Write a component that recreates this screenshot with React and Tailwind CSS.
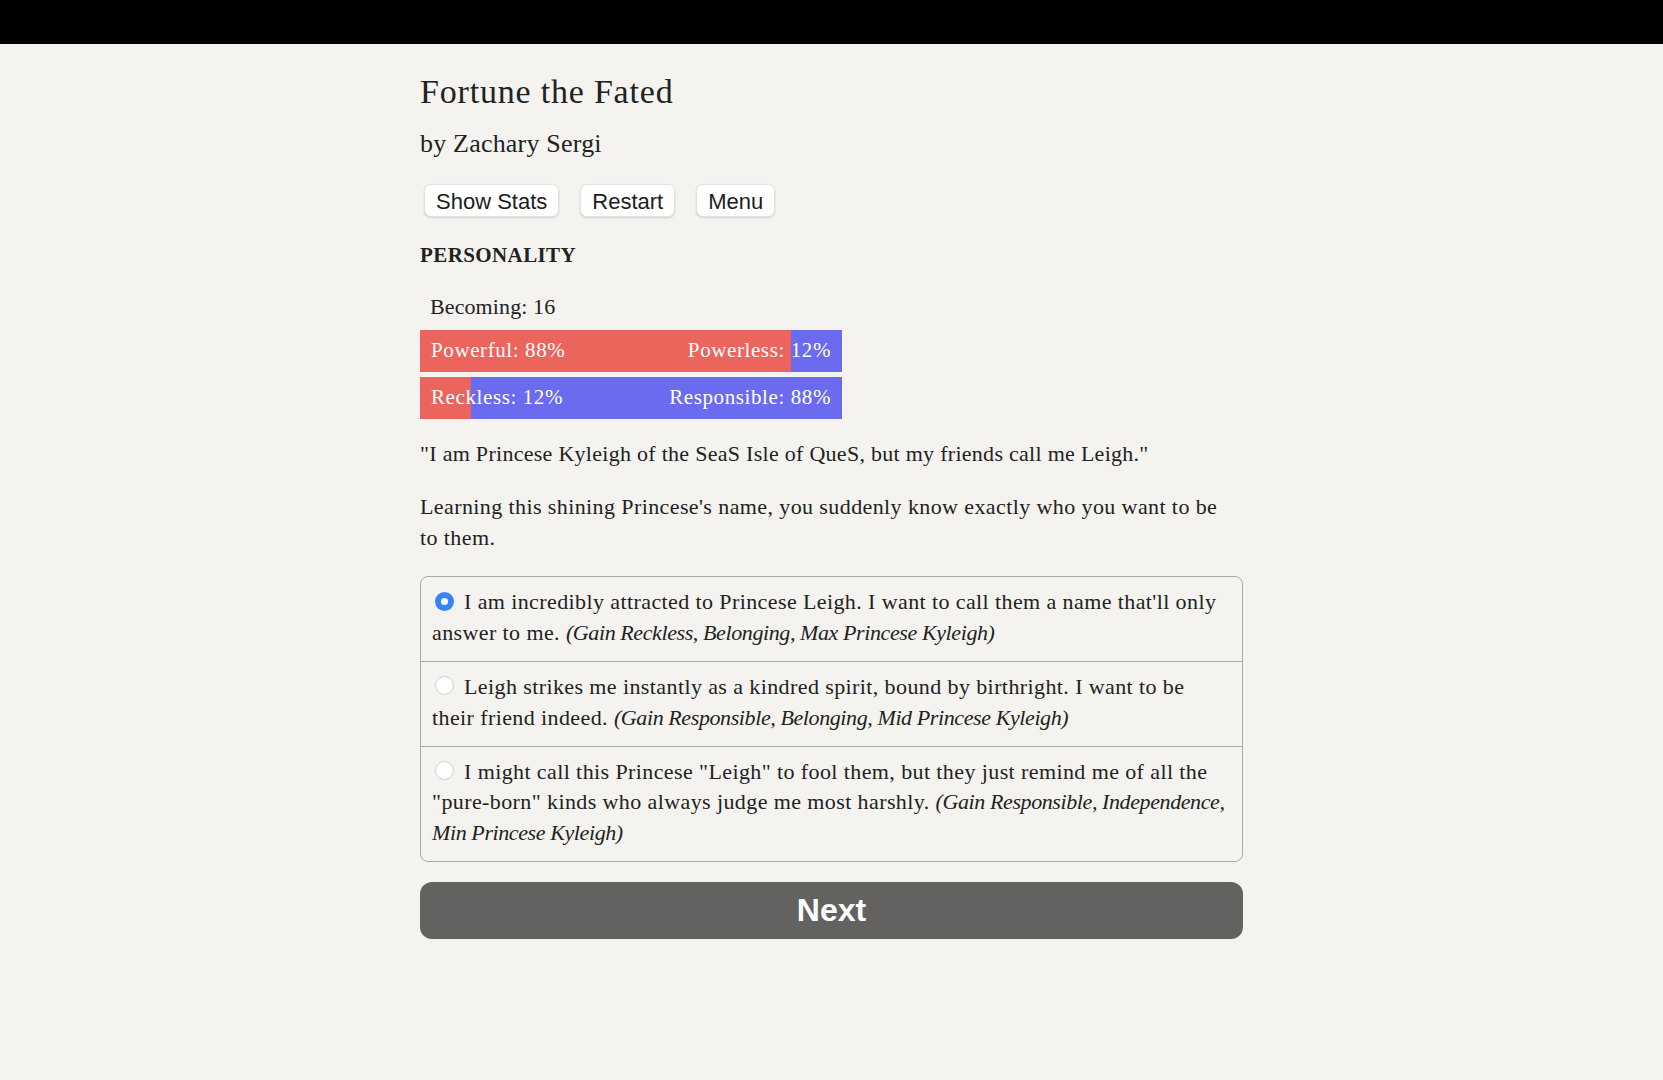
import { useState } from "react";

const SERIF = "font-['Liberation_Serif',serif]";
const SANS = "font-['Liberation_Sans',Arial,sans-serif]";

const OPTIONS = [
  {
    text: "I am incredibly attracted to Princese Leigh. I want to call them a name that'll only answer to me.",
    note: "(Gain Reckless, Belonging, Max Princese Kyleigh)",
  },
  {
    text: "Leigh strikes me instantly as a kindred spirit, bound by birthright. I want to be their friend indeed.",
    note: "(Gain Responsible, Belonging, Mid Princese Kyleigh)",
  },
  {
    text: 'I might call this Princese "Leigh" to fool them, but they just remind me of all the "pure-born" kinds who always judge me most harshly.',
    note: "(Gain Responsible, Independence, Min Princese Kyleigh)",
  },
];

function StatBar({ left, right, pct }) {
  return (
    <div className="relative h-[42px] w-[422px] bg-[#6b6bf0]">
      <div className="h-full bg-[#ec655d]" style={{ width: `${pct}%` }} />
      <div className="absolute inset-0 flex items-center justify-between px-[11px] pb-[3px] text-[21px] leading-[30px] tracking-[0.6px] text-white">
        <span>{left}</span>
        <span>{right}</span>
      </div>
    </div>
  );
}

function Radio({ checked }) {
  return checked ? (
    <span className="mr-[10px] ml-[3px] inline-flex h-[19px] w-[19px] shrink-0 -translate-y-[3px] items-center justify-center rounded-full bg-[#3b82f6] align-middle">
      <span className="h-[7px] w-[7px] rounded-full bg-white" />
    </span>
  ) : (
    <span className="mr-[10px] ml-[3px] inline-block h-[19px] w-[19px] shrink-0 -translate-y-[3px] rounded-full border border-[#cfcfcf] bg-white align-middle" />
  );
}

export default function App() {
  const [choice, setChoice] = useState(0);

  return (
    <div className={`min-h-[1080px] bg-[#f4f3ef] text-[#222] ${SERIF}`}>
      <div className="h-[44px] bg-black" />

      <div className="mx-auto w-[823px]">
        <h1 className="mt-[28px] text-[34px] leading-[40px] tracking-[0.8px]">Fortune the Fated</h1>
        <p className="mt-[16px] text-[26px] leading-[32px] tracking-[0.2px]">by Zachary Sergi</p>

        <div className={`mt-[24px] ml-[4px] flex gap-[21px] ${SANS}`}>
          {["Show Stats", "Restart", "Menu"].map(b => (
            <button key={b} className="h-[33px] rounded-[7px] border border-[#e2e2e2] bg-white px-[11px] text-[22px] leading-[33px] text-[#1c1c1c] shadow-[0_1px_2px_rgba(0,0,0,0.15)]">
              {b}
            </button>
          ))}
        </div>

        <h2 className="mt-[26px] text-[21px] font-bold leading-[24px] tracking-[0.4px]">PERSONALITY</h2>

        <p className="mt-[25px] pl-[10px] text-[22px] leading-[30px] tracking-[0.1px]">Becoming: 16</p>

        <div className="mt-[8px] flex flex-col gap-[5px]">
          <StatBar left="Powerful: 88%" right="Powerless: 12%" pct={88} />
          <StatBar left="Reckless: 12%" right="Responsible: 88%" pct={12} />
        </div>

        <p className="mt-[20px] text-[22px] leading-[30.8px] tracking-[0.28px]">
          "I am Princese Kyleigh of the SeaS Isle of QueS, but my friends call me Leigh."
        </p>
        <p className="mt-[22px] pr-[14px] text-[22px] leading-[30.8px] tracking-[0.4px]">
          Learning this shining Princese's name, you suddenly know exactly who you want to be to them.
        </p>

        <div className="mt-[23px] overflow-hidden rounded-[8px] border border-[#a9a9a9] tracking-[0.4px]">
          {OPTIONS.map((o, i) => (
            <label
              key={i}
              onClick={() => setChoice(i)}
              className={`block cursor-pointer px-[11px] pt-[10px] pb-[12px] text-[22px] leading-[30.8px] ${i > 0 ? "border-t border-[#a9a9a9]" : ""}`}
            >
              <Radio checked={choice === i} />
              {o.text} <i className="tracking-[-0.4px]">{o.note}</i>
            </label>
          ))}
        </div>

        <button className={`mt-[20px] h-[57px] w-full rounded-[12px] bg-[#636260] text-[32px] font-bold text-white ${SANS}`}>
          Next
        </button>
      </div>
    </div>
  );
}
